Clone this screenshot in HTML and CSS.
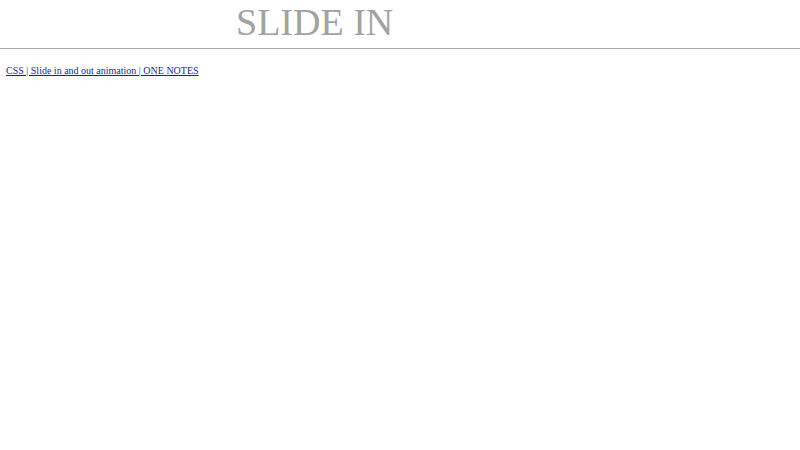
FILE: index.html
```html
<!DOCTYPE html>
<html>
<head>
<meta charset="utf-8">
<link rel="stylesheet" href="styles.css">
</head>
<body>
<header class="bar">
  <h1 class="title">SLIDE IN</h1>
</header>
<main class="content">
  <a class="link" href="#">CSS | Slide in and out animation | ONE NOTES</a>
</main>
</body>
</html>
```
FILE: styles.css
```css
html, body {
  margin: 0;
  padding: 0;
  background: #fff;
  font-family: "Liberation Serif", "Times New Roman", serif;
}
.bar {
  height: 49px;
  border-bottom: 1px solid #a8a8a8;
  box-sizing: border-box;
  padding-left: 236px;
  overflow: hidden;
}
.title {
  margin: 0;
  font-weight: normal;
  font-size: 38px;
  line-height: 44px;
  color: #a2a2a2;
}
.content {
  padding: 16px 6px;
  font-size: 10px;
}
.link {
  color: #1c1c9a;
}
```
